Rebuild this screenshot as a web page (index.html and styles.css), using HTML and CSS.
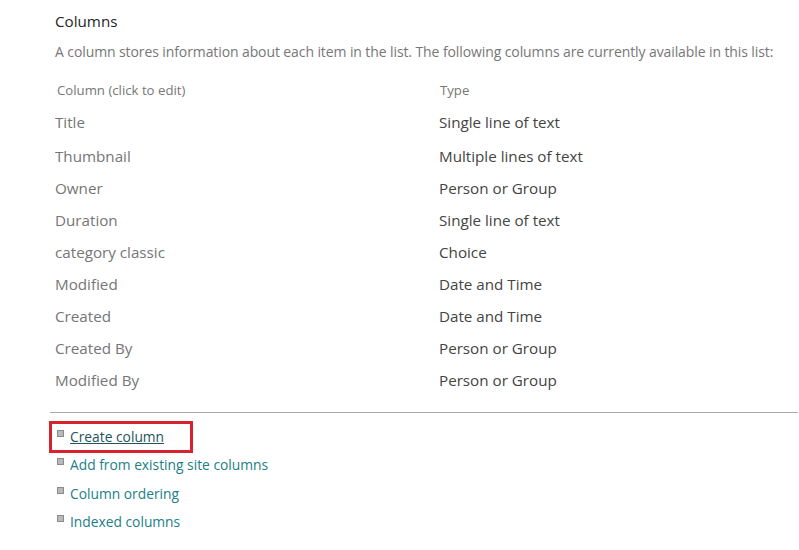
FILE: index.html
```html
<!DOCTYPE html>
<html>
<head>
<meta charset="utf-8">
<link rel="stylesheet" href="styles.css">
</head>
<body>
<div class="page">
  <h2 class="title">Columns</h2>
  <p class="desc">A column stores information about each item in the list. The following columns are currently available in this list:</p>
  <div class="cols">
    <div class="hd name">Column (click to edit)</div><div class="hd type">Type</div>
    <div class="name first">Title</div><div class="type first">Single line of text</div>
    <div class="name">Thumbnail</div><div class="type">Multiple lines of text</div>
    <div class="name">Owner</div><div class="type">Person or Group</div>
    <div class="name">Duration</div><div class="type">Single line of text</div>
    <div class="name">category classic</div><div class="type">Choice</div>
    <div class="name">Modified</div><div class="type">Date and Time</div>
    <div class="name">Created</div><div class="type">Date and Time</div>
    <div class="name">Created By</div><div class="type">Person or Group</div>
    <div class="name">Modified By</div><div class="type">Person or Group</div>
  </div>
  <div class="sep"></div>
  <ul class="links">
    <li class="hl"><span class="bullet"></span><a class="active" href="#">Create column</a></li>
    <li><span class="bullet"></span><a href="#">Add from existing site columns</a></li>
    <li><span class="bullet"></span><a href="#">Column ordering</a></li>
    <li><span class="bullet"></span><a href="#">Indexed columns</a></li>
  </ul>
</div>
</body>
</html>
```
FILE: styles.css
```css
html, body { margin: 0; padding: 0; background: #fff; }
body { font-family: "Open Sans", "Noto Sans", sans-serif; }
.page { padding: 0 0 0 50px; }
.title { margin: 0; padding: 10px 0 0 5px; font-size: 15.2px; font-weight: 400; color: #262626; line-height: 22px; }
.desc { margin: 0; padding: 10px 0 0 5px; font-size: 14px; color: #777; line-height: 20px; white-space: nowrap; letter-spacing: -0.1px; }
.cols { display: grid; grid-template-columns: 384px auto; padding: 18px 0 0 5px; }
.cols > div { line-height: 32px; font-size: 15.2px; white-space: nowrap; }
.cols .name { color: #767676; }
.cols .type { color: #444; }
.cols .hd { font-size: 13.2px; color: #777; line-height: 20px; }
.cols .hd.name { padding-left: 2px; }
.cols .hd.type { padding-left: 1px; }
.cols .first { padding-top: 6px; padding-bottom: 2px; line-height: 32px; }
.sep { border-top: 1px solid #ababab; margin-top: 16px; margin-right: 1px; }
.links { list-style: none; margin: 0; padding: 14px 0 0 0; }
.links li { display: flex; align-items: flex-start; height: 28.4px; padding-left: 7px; position: relative; }
.links li.hl::after { content: ""; position: absolute; left: -1px; top: -6px; width: 138px; height: 26px; border: 3px solid #d8222e; }
.bullet { width: 5px; height: 5px; background: #b9b9b9; border: 1px solid #8a8a8a; margin-top: 3px; margin-right: 6px; flex: none; }
.links a { font-size: 13.8px; color: #1b8087; text-decoration: none; line-height: 20px; }
.links a.active { color: #24545a; text-decoration: underline; }
```
